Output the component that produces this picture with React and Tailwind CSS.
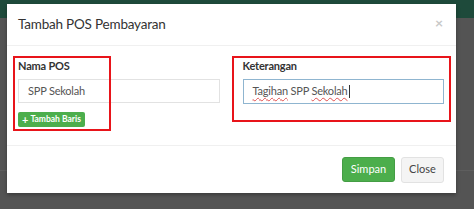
export default function App() {
  const font = { fontFamily: '"Source Sans Pro", Lato, "Open Sans", sans-serif' };
  return (
    <div className="relative w-[474px] h-[209px] overflow-hidden bg-[#545454]" style={font}>
      <div className="h-[18px] bg-[#1e4a3b]" />
      <div className="h-[153px] border-b border-[#5e5e5e]" />

      <div className="absolute left-[7px] top-[4px] w-[449px] h-[189px] bg-white flex flex-col shadow-[0_2px_4px_rgba(0,0,0,0.3)]">
        <div className="h-[42px] shrink-0 flex items-center justify-between pl-[11px] pr-[13px] border-b border-[#f0f0f0]">
          <span className="text-[13.5px] tracking-[-0.2px] text-[#333] leading-none">Tambah POS Pembayaran</span>
          <span className="text-[14px] text-[#c8c8c8] font-bold leading-none -mt-[4px]">×</span>
        </div>

        <div className="relative flex-1 grid grid-cols-2 gap-[23px] pl-[11px] pr-[12px] pt-[11px]">
          <div className="flex flex-col">
            <label className="text-[11px] tracking-[-0.2px] font-bold text-[#333] leading-[18px]">Nama POS</label>
            <div className="mt-[4px] h-[24px] border border-[#e2e2e2] flex items-center pl-[9px] text-[11px] tracking-[-0.2px] text-[#555]">SPP Sekolah</div>
            <button className="mt-[9px] self-start h-[15px] px-[4px] rounded-[2px] bg-[#4cae4c] text-white text-[8.5px] font-bold flex items-center gap-[2px] leading-none">
              <span className="text-[11px]">+</span>Tambah Baris
            </button>
          </div>
          <div className="flex flex-col">
            <label className="text-[11px] tracking-[-0.2px] font-bold text-[#333] leading-[18px]">Keterangan</label>
            <div className="mt-[4px] h-[25px] border border-[#8fb5d0] flex items-center pl-[9px] text-[11px] tracking-[-0.2px] text-[#555]">
              <span className="underline decoration-wavy decoration-[#e05050] decoration-[1px] underline-offset-2">Tagihan</span>
              <span>&nbsp;SPP&nbsp;</span>
              <span className="underline decoration-wavy decoration-[#e05050] decoration-[1px] underline-offset-2">Sekolah</span>
              <span className="w-px h-[13px] bg-[#333] ml-px" />
            </div>
          </div>
          <div className="absolute left-[6px] top-[10px] w-[98px] h-[75px] border-2 border-[#e8141a]" />
          <div className="absolute left-[225px] top-[10px] w-[219px] h-[66px] border-2 border-[#e8141a]" />
        </div>

        <div className="h-[48px] shrink-0 border-t border-[#f0f0f0] flex items-center justify-end gap-[6px] pr-[12px]">
          <button className="h-[25px] w-[53px] rounded-[3px] bg-[#4cae4c] border border-[#449d44] text-white text-[11px]">Simpan</button>
          <button className="h-[26px] w-[43px] rounded-[3px] bg-[#f4f4f4] border border-[#e2e2e2] text-[#444] text-[11px]">Close</button>
        </div>
      </div>
    </div>
  );
}
